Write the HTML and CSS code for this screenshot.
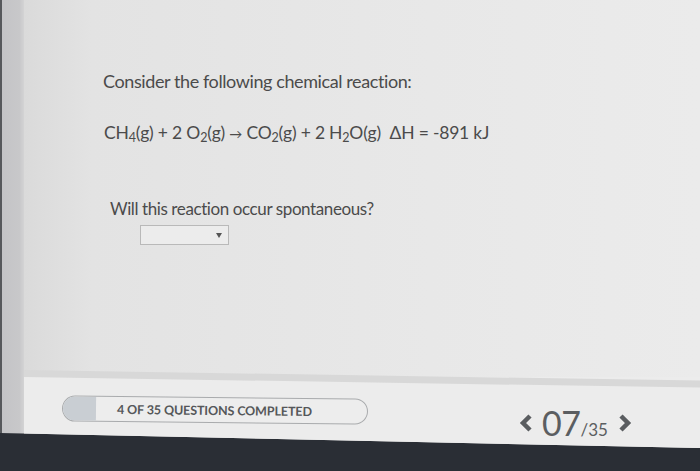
FILE: index.html
```html
<!DOCTYPE html>
<html>
<head>
<meta charset="utf-8">
<link rel="stylesheet" href="styles.css">
</head>
<body>
<div class="screen">
  <div class="edge"></div>
  <div class="strip"></div>
  <div class="page">
    <div class="question">
      <p class="intro">Consider the following chemical reaction:</p>
      <p class="eq">CH<sub>4</sub>(g) + 2 O<sub>2</sub>(g) <span class="arrow">→</span> CO<sub>2</sub>(g) + 2 H<sub>2</sub>O(g) &nbsp;ΔH = -891 kJ</p>
      <p class="ask">Will this reaction occur spontaneous?</p>
      <div class="select"><span class="caret"></span></div>
    </div>
    <div class="divider"></div>
    <div class="footer">
      <div class="progress">
        <div class="fill"></div>
        <span class="ptext">4 OF 35 QUESTIONS COMPLETED</span>
      </div>
      <div class="nav">
        <svg class="chev" width="16" height="20" viewBox="0 0 16 20"><path d="M12 3 L5 10 L12 17" fill="none" stroke="#5a5d60" stroke-width="4.5" stroke-linejoin="miter"/></svg>
        <span class="num">07</span><span class="total">/35</span>
        <svg class="chev right" width="16" height="20" viewBox="0 0 16 20"><path d="M4 3 L11 10 L4 17" fill="none" stroke="#5a5d60" stroke-width="4.5" stroke-linejoin="miter"/></svg>
      </div>
    </div>
  </div>
</div>
</body>
</html>
```
FILE: styles.css
```css
html, body {
  margin: 0;
  padding: 0;
}
body {
  width: 700px;
  height: 471px;
  overflow: hidden;
  background: #2a2e35;
  font-family: Lato, "Open Sans", sans-serif;
  color: #4b4b4b;
}
.screen {
  display: flex;
  height: 448px;
  clip-path: polygon(0 0, 100% 0, 100% 448px, 0 433px);
}
.edge {
  width: 2px;
  background: #56585c;
}
.strip {
  width: 22px;
  background: linear-gradient(90deg, #c3c3c6 0%, #c8c8ca 80%, #d3d3d4 100%);
}
.page {
  flex: 1;
  display: flex;
  flex-direction: column;
  background: linear-gradient(90deg, #dadada 0%, #e3e3e3 10%, #e8e8e8 60%, #ebebeb 100%);
}
.question {
  height: 370px;
  padding-left: 79px;
  box-sizing: border-box;
  padding-top: 70px;
}
.question p {
  margin: 0;
  letter-spacing: -0.4px;
}
.intro {
  font-size: 18px;
  line-height: 22px;
}
.eq {
  font-size: 17.5px;
  line-height: 22px;
  margin-top: 30px !important;
  padding-left: 1px;
  letter-spacing: -0.2px !important;
}
.eq sub {
  font-size: 12.5px;
  vertical-align: -3px;
  line-height: 0;
}
.arrow {
  font-size: 13px;
}
.ask {
  font-size: 17px;
  line-height: 22px;
  margin-top: 53px !important;
  padding-left: 7px;
}
.select {
  margin-top: 5px;
  margin-left: 37px;
  width: 87px;
  height: 18px;
  border: 1px solid #b9b9b9;
  background: #ececec;
  position: relative;
}
.caret {
  position: absolute;
  right: 6px;
  top: 7px;
  width: 0;
  height: 0;
  border-left: 3px solid transparent;
  border-right: 3px solid transparent;
  border-top: 5px solid #555;
}
.divider {
  height: 7px;
  background: #d8d8d8;
  transform: skewY(0.9deg);
  transform-origin: left top;
}
.footer {
  flex: 1;
  background: #ececec;
  display: flex;
  align-items: flex-start;
  padding-left: 38px;
  padding-top: 20px;
}
.progress {
  width: 304px;
  height: 24px;
  border: 1px solid #a9abad;
  border-radius: 13px;
  display: flex;
  align-items: center;
  overflow: hidden;
  background: #ededed;
  transform: rotate(0.6deg);
}
.fill {
  width: 33px;
  height: 100%;
  background: #c9ced3;
}
.ptext {
  margin-left: 21px;
  font-size: 12.5px;
  font-weight: 700;
  color: #555759;
  letter-spacing: -0.1px;
}
.nav {
  display: flex;
  align-items: baseline;
  margin-left: 150px;
  margin-top: 5px;
  color: #5b5e61;
}
.chev {
  align-self: center;
}
.num {
  font-size: 34px;
  font-weight: 400;
  margin-left: 8px;
  letter-spacing: -0.5px;
}
.total {
  font-size: 17px;
  margin-right: 9px;
}
```
